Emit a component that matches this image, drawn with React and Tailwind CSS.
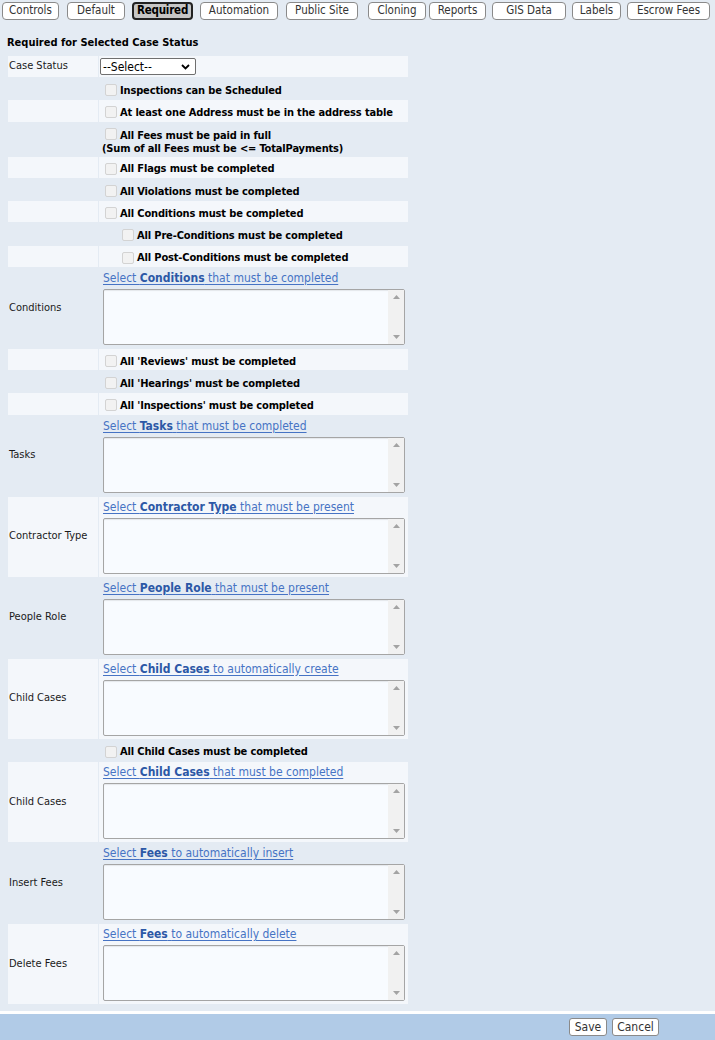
import React from 'react'

const FONT = { fontFamily: '"DejaVu Sans Condensed", "Liberation Sans", sans-serif' }

const tabs = [
  { label: 'Controls', cls: 'w-[57px] ml-[2px]' },
  { label: 'Default', cls: 'w-[58px] ml-[8px]' },
  { label: 'Required', cls: 'w-[61px] ml-[7px]', active: true },
  { label: 'Automation', cls: 'w-[78px] ml-[7px]' },
  { label: 'Public Site', cls: 'w-[72px] ml-[8px]' },
  { label: 'Cloning', cls: 'w-[58px] ml-[10px]' },
  { label: 'Reports', cls: 'w-[57px] ml-[3px]' },
  { label: 'GIS Data', cls: 'w-[74px] ml-[6px]' },
  { label: 'Labels', cls: 'w-[49px] ml-[6px]' },
  { label: 'Escrow Fees', cls: 'w-[83px] ml-[6px]' },
]

function Check({ indent, plain }) {
  const ml = plain ? 'ml-[3px]' : indent ? 'ml-[23px]' : 'ml-[6px]'
  return (
    <span
      className={`inline-block shrink-0 w-[12px] h-[12px] border border-[#d3d3d3] bg-[#f2f2f2] rounded-[2px] mr-[3px] -mt-[2px] ${ml}`}
    />
  )
}

function ListBox() {
  return (
    <div className="ml-[4px] mr-[3px] h-[56px] border border-[#a5a5a5] rounded-[2px] bg-[#f8fbff] flex justify-end shadow-[inset_0_1px_1px_rgba(0,0,0,0.08)]">
      <div className="w-[16px] bg-[#f1f1f1] flex flex-col justify-between items-center py-[5px] text-[#a3a3a3]">
        <svg width="7" height="4" viewBox="0 0 7 4"><path d="M0 4 L3.5 0 L7 4 Z" fill="currentColor" /></svg>
        <svg width="7" height="4" viewBox="0 0 7 4"><path d="M0 0 L3.5 4 L7 0 Z" fill="currentColor" /></svg>
      </div>
    </div>
  )
}

function Row({ light, label, children, top }) {
  const bg = light ? 'bg-[#f4f7fb]' : ''
  return (
    <tr>
      <td className={`${bg} w-[90px] pl-[1px] text-[11px] text-[#1a1a1a] align-middle`}>{label}</td>
      <td className={`${bg} p-0 ${top ? 'align-top' : 'align-middle'}`}>{children}</td>
    </tr>
  )
}

function CheckRow({ light, text, indent }) {
  return (
    <Row light={light}>
      <div className="h-[21.25px] flex items-center pt-[5px] text-[11px] font-bold text-black tracking-[-0.15px] whitespace-nowrap">
        <Check indent={indent} />
        <span>{text}</span>
      </div>
    </Row>
  )
}

function SelectRow({ light, label, bold, rest }) {
  return (
    <Row light={light} label={label} top>
      <div className="h-[80px] pt-[2px]">
        <a href="#" className="block ml-[4px] h-[19px] leading-[17px] text-[12px] text-[#4673c4] underline underline-offset-[2px]">
          Select <span className="font-bold text-[#2c58a6]">{bold}</span> {rest}
        </a>
        <ListBox />
      </div>
    </Row>
  )
}

export default function App() {
  return (
    <div className="h-screen flex flex-col bg-[#e4ebf3] text-[#1a1a1a]" style={FONT}>
      <div className="flex-1">
        {/* Tabs */}
        <div className="flex pt-[2px]">
          {tabs.map((t) =>
            t.active ? (
              <button
                key={t.label}
                className={`${t.cls} shrink-0 h-[18px] rounded-[4px] border-2 border-[#222] bg-[#c6c6c6] text-[11.5px] font-bold text-black leading-none tracking-[-0.2px]`}
              >
                {t.label}
              </button>
            ) : (
              <button
                key={t.label}
                className={`${t.cls} shrink-0 h-[18px] rounded-[4px] border border-[#8a8a8a] bg-white text-[11.5px] text-[#333] leading-none`}
              >
                {t.label}
              </button>
            )
          )}
        </div>

        <div className="pl-[7px] pt-[16px] text-[11px] font-bold text-black leading-[14px]">
          Required for Selected Case Status
        </div>

        <table className="ml-[7px] mt-[5px] border-separate border-spacing-[1px] w-[402px]">
          <tbody>
            <Row light label="Case Status">
              <div className="h-[21px] flex items-center">
                <div className="ml-[1px] w-[96px] h-[17px] border border-[#6f6f6f] rounded-[2px] bg-white flex items-center justify-between px-[2px] text-[12px] text-black">
                  <span>--Select--</span>
                  <svg width="9" height="6" viewBox="0 0 9 6" className="mr-[3px]">
                    <path d="M1 1 L4.5 4.5 L8 1" stroke="#000" strokeWidth="1.8" fill="none" />
                  </svg>
                </div>
              </div>
            </Row>
            <CheckRow text="Inspections can be Scheduled" />
            <CheckRow light text="At least one Address must be in the address table" />
            <Row top>
              <div className="h-[33px] pt-[6px] pl-[3px] text-[11px] font-bold text-black leading-[13px] tracking-[-0.15px] whitespace-nowrap">
                <div className="flex items-center">
                  <Check plain />
                  <span>All Fees must be paid in full</span>
                </div>
                <div>(Sum of all Fees must be &lt;= TotalPayments)</div>
              </div>
            </Row>
            <CheckRow light text="All Flags must be completed" />
            <CheckRow text="All Violations must be completed" />
            <CheckRow light text="All Conditions must be completed" />
            <CheckRow indent text="All Pre-Conditions must be completed" />
            <CheckRow light indent text="All Post-Conditions must be completed" />
            <SelectRow label="Conditions" bold="Conditions" rest="that must be completed" />
            <CheckRow light text="All 'Reviews' must be completed" />
            <CheckRow text="All 'Hearings' must be completed" />
            <CheckRow light text="All 'Inspections' must be completed" />
            <SelectRow label="Tasks" bold="Tasks" rest="that must be completed" />
            <SelectRow light label="Contractor Type" bold="Contractor Type" rest="that must be present" />
            <SelectRow label="People Role" bold="People Role" rest="that must be present" />
            <SelectRow light label="Child Cases" bold="Child Cases" rest="to automatically create" />
            <CheckRow text="All Child Cases must be completed" />
            <SelectRow light label="Child Cases" bold="Child Cases" rest="that must be completed" />
            <SelectRow label="Insert Fees" bold="Fees" rest="to automatically insert" />
            <SelectRow light label="Delete Fees" bold="Fees" rest="to automatically delete" />
          </tbody>
        </table>
      </div>

      {/* Footer */}
      <div className="h-[29px] border-t-[3px] border-white bg-[#b1cbe7] flex items-center justify-end gap-[5px] pr-[56px]">
        <button className="w-[38px] h-[18px] rounded-[3px] border border-[#8a8a8a] bg-white text-[12px] text-[#333] leading-none">
          Save
        </button>
        <button className="w-[47px] h-[18px] rounded-[3px] border border-[#8a8a8a] bg-white text-[12px] text-[#333] leading-none">
          Cancel
        </button>
      </div>
    </div>
  )
}
